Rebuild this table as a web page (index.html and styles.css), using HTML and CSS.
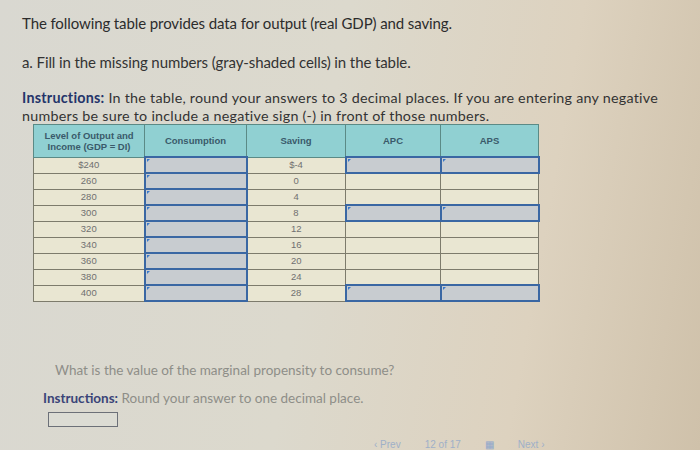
FILE: index.html
```html
<!DOCTYPE html>
<html>
<head>
<meta charset="utf-8">
<link rel="stylesheet" href="styles.css">
</head>
<body>
<div class="page">
  <p class="lead">The following table provides data for output (real GDP) and saving.</p>
  <p class="part">a. Fill in the missing numbers (gray-shaded cells) in the table.</p>
  <p class="instr"><b>Instructions:</b> In the table, round your answers to 3 decimal places. If you are entering any negative numbers be sure to include a negative sign (-) in front of those numbers.</p>
  <table class="data">
    <thead>
      <tr><th class="c1">Level of Output and<br>Income (GDP = DI)</th><th class="c2">Consumption</th><th class="c3">Saving</th><th class="c4">APC</th><th class="c5">APS</th></tr>
    </thead>
    <tbody>
      <tr><td>$240</td><td class="in"></td><td>$-4</td><td class="in"></td><td class="in"></td></tr>
      <tr><td>260</td><td class="in"></td><td>0</td><td></td><td></td></tr>
      <tr><td>280</td><td class="in"></td><td>4</td><td></td><td></td></tr>
      <tr><td>300</td><td class="in"></td><td>8</td><td class="in"></td><td class="in"></td></tr>
      <tr><td>320</td><td class="in"></td><td>12</td><td></td><td></td></tr>
      <tr><td>340</td><td class="in"></td><td>16</td><td></td><td></td></tr>
      <tr><td>360</td><td class="in"></td><td>20</td><td></td><td></td></tr>
      <tr><td>380</td><td class="in"></td><td>24</td><td></td><td></td></tr>
      <tr><td>400</td><td class="in"></td><td>28</td><td class="in"></td><td class="in"></td></tr>
    </tbody>
  </table>
  <p class="q">What is the value of the marginal propensity to consume?</p>
  <p class="instr2"><b>Instructions:</b> Round your answer to one decimal place.</p>
  <div class="answer"></div>
  <div class="nav">
    <span class="prev">&lsaquo; Prev</span>
    <span class="count">12 of 17</span>
    <span class="grid">&#9638;</span>
    <span class="next">Next &rsaquo;</span>
  </div>
</div>
</body>
</html>
```
FILE: styles.css
```css
html, body {
  margin: 0;
  padding: 0;
}
body {
  width: 700px;
  height: 450px;
  overflow: hidden;
  font-family: "Lato", "Liberation Sans", sans-serif;
  background: linear-gradient(100deg, #d9d8d1 0%, #dcd9cd 45%, #ddd2bf 75%, #cfc1aa 100%);
}
.page {
  position: relative;
  height: 450px;
  padding: 14px 0 0 22px;
  box-sizing: border-box;
}
p { margin: 0; }
.lead {
  font-size: 15px;
  color: #2c2c2c;
  letter-spacing: -0.1px;
}
.part {
  margin-top: 21px;
  font-size: 15px;
  color: #333;
  letter-spacing: -0.1px;
}
.instr {
  margin-top: 18px;
  width: 650px;
  font-size: 14.3px;
  line-height: 18px;
  color: #333;
  letter-spacing: 0.25px;
}
.instr b, .instr2 b {
  color: #24346a;
}
.data {
  margin: -1px 0 0 11px;
  border-collapse: collapse;
  font-family: "Liberation Sans", sans-serif;
  font-size: 9.5px;
  color: #707070;
}
.data th {
  background: #90d0d2;
  color: #3a5a6a;
  font-size: 9.5px;
  font-weight: bold;
  height: 31px;
  padding: 0;
  border: 1px solid #5b8a86;
  line-height: 11px;
}
.data th.c1 { width: 110px; }
.data th.c2 { width: 101px; }
.data th.c3 { width: 98px; }
.data th.c4 { width: 94px; }
.data th.c5 { width: 97px; }
.data td {
  height: 14px;
  padding: 0;
  line-height: 12px;
  text-align: center;
  background: #e9e6d2;
  border: 1px solid #7d7b6c;
}
.data td.in {
  background: #c8ccd0;
  border: 2px solid #3a67a3;
  position: relative;
}
.data td.in::before {
  content: "";
  position: absolute;
  left: 1px;
  top: 1px;
  border-top: 3px solid #3a78c8;
  border-right: 3px solid transparent;
}
.q {
  margin: 60px 0 0 33px;
  font-size: 13.5px;
  color: #8e8e88;
}
.instr2 {
  margin: 12px 0 0 21px;
  font-size: 13.5px;
  color: #8e8e88;
}
.instr2 b { color: #3a4478; }
.answer {
  margin: 6px 0 0 26px;
  width: 68px;
  height: 13px;
  border: 1px solid #6c7078;
  background: #dcdcd4;
}
.nav {
  position: absolute;
  left: 374px;
  top: 439px;
  display: flex;
  gap: 24px;
  font-family: "Liberation Sans", sans-serif;
  font-size: 10px;
  color: #9fb0c8;
}
.grid { color: #8ea6cc; }
```
